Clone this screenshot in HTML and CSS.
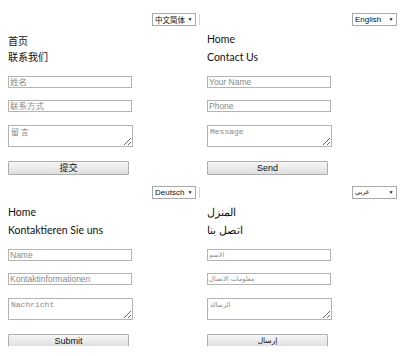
FILE: index.html
```html
<!DOCTYPE html>
<html>
<head>
<meta charset="utf-8">
<link rel="stylesheet" href="styles.css">
</head>
<body>
<div class="grid">
  <section class="panel panel-left">
    <div class="lang-row"><div class="lang"><span class="lang-text cjk">中文简体</span><span class="arrow">▼</span></div></div>
    <div class="heading cjk">首页</div>
    <div class="heading cjk">联系我们</div>
    <div class="field"><input class="input" placeholder="姓名"></div>
    <div class="field"><input class="input" placeholder="联系方式"></div>
    <div class="field"><textarea class="textarea cjk" placeholder="留 言"></textarea></div>
    <div class="field"><button class="btn">提交</button></div>
  </section>
  <section class="panel panel-right">
    <div class="lang-row"><span class="tick"></span><div class="lang"><span class="lang-text">English</span><span class="arrow">▼</span></div></div>
    <div class="heading">Home</div>
    <div class="heading">Contact Us</div>
    <div class="field"><input class="input" placeholder="Your Name"></div>
    <div class="field"><input class="input" placeholder="Phone"></div>
    <div class="field"><textarea class="textarea" placeholder="Message"></textarea></div>
    <div class="field"><button class="btn">Send</button></div>
  </section>
  <section class="panel panel-left">
    <div class="lang-row"><div class="lang"><span class="lang-text">Deutsch</span><span class="arrow">▼</span></div></div>
    <div class="heading">Home</div>
    <div class="heading">Kontaktieren Sie uns</div>
    <div class="field"><input class="input" placeholder="Name"></div>
    <div class="field"><input class="input" placeholder="Kontaktinformationen"></div>
    <div class="field"><textarea class="textarea" placeholder="Nachricht"></textarea></div>
    <div class="field"><button class="btn">Submit</button></div>
  </section>
  <section class="panel panel-right">
    <div class="lang-row"><span class="tick"></span><div class="lang"><span class="lang-text ar">عربي</span><span class="arrow">▼</span></div></div>
    <div class="heading">المنزل</div>
    <div class="heading">اتصل بنا</div>
    <div class="field"><input class="input ar" placeholder="الاسم"></div>
    <div class="field"><input class="input ar" placeholder="معلومات الاتصال"></div>
    <div class="field"><textarea class="textarea ar" placeholder="الرسالة"></textarea></div>
    <div class="field"><button class="btn ar-btn">إرسال</button></div>
  </section>
</div>
</body>
</html>
```
FILE: styles.css
```css
* { box-sizing: border-box; }
html, body { margin: 0; padding: 0; background: #fff; }
body { font-family: "Lato", "Noto Sans CJK SC", sans-serif; color: #222; }
.grid {
  display: grid;
  grid-template-columns: 199px 201px;
  grid-auto-rows: 173px;
}
.panel { display: flex; flex-direction: column; padding: 13px 3px 0 8px; }
.lang-row { display: flex; justify-content: flex-end; align-items: flex-start; height: 13px; position: relative; }
.tick { position: absolute; left: -8px; top: 1px; width: 1px; height: 11px; background: #d8d8d8; }
.lang {
  position: relative;
  display: flex; align-items: center;
  height: 13px; width: 44px;
  border: 1px solid #a9a9a9;
  font-family: "Liberation Sans", "Noto Sans CJK SC", sans-serif;
  font-size: 8px; line-height: 11px; color: #111;
  padding-left: 2px;
}
.panel-right .lang { width: 45px; }
.lang-text { flex: 1; white-space: nowrap; overflow: hidden; }
.lang-text.cjk { font-family: "Noto Sans CJK SC", sans-serif; font-size: 7.5px; }
.lang-text.ar { font-family: "DejaVu Sans", sans-serif; font-size: 6.5px; }
.arrow { font-size: 5px; width: 8px; text-align: center; color: #222; margin-right: 1px; }
.heading {
  font-size: 10.5px; line-height: 18px; height: 18px; color: #111;
  font-family: "Lato", "Noto Sans CJK SC", sans-serif;
}
.heading.cjk { font-family: "Noto Sans CJK SC", sans-serif; font-size: 10px; line-height: 16px; height: 16px; }
.lang-row + .heading { margin-top: 4px; }
.lang-row + .heading.cjk { margin-top: 7px; }
.field { display: flex; }
.heading + .field { margin-top: 10px; }
.heading.cjk + .field { margin-top: 11px; }
.field + .field { margin-top: 12px; }
.field:nth-last-child(2) { margin-top: 13px; }
.field:last-child { margin-top: 14px; }
.input, .textarea {
  width: 124px; height: 12px;
  border: 1px solid #b4b4b4;
  padding: 0 1px; margin: 0;
  font-family: "Liberation Sans", "Noto Sans CJK SC", sans-serif;
  font-size: 8.5px; line-height: 10px;
  background: #fff; outline: none;
}
.textarea {
  width: 125px; height: 22px; resize: both;
  font-family: "Liberation Mono", monospace; font-size: 8px; padding: 1px 2px;
}
.textarea.cjk { font-family: "Noto Sans CJK SC", monospace; font-size: 8px; }
.input::placeholder, .textarea::placeholder { color: #8a8a8a; opacity: 1; }
.ar { font-family: "DejaVu Sans", "Noto Sans", sans-serif; font-size: 6.5px; }
.btn {
  width: 121px; height: 14px; margin: 0; padding: 0;
  border: 1px solid #adadad; border-radius: 1px;
  background: linear-gradient(#f6f6f6, #dedede);
  font-family: "Liberation Sans", "Noto Sans CJK SC", sans-serif;
  font-size: 9px; line-height: 12px; color: #111;
}
.ar-btn { font-family: "DejaVu Sans", sans-serif; font-size: 7.5px; }
```
